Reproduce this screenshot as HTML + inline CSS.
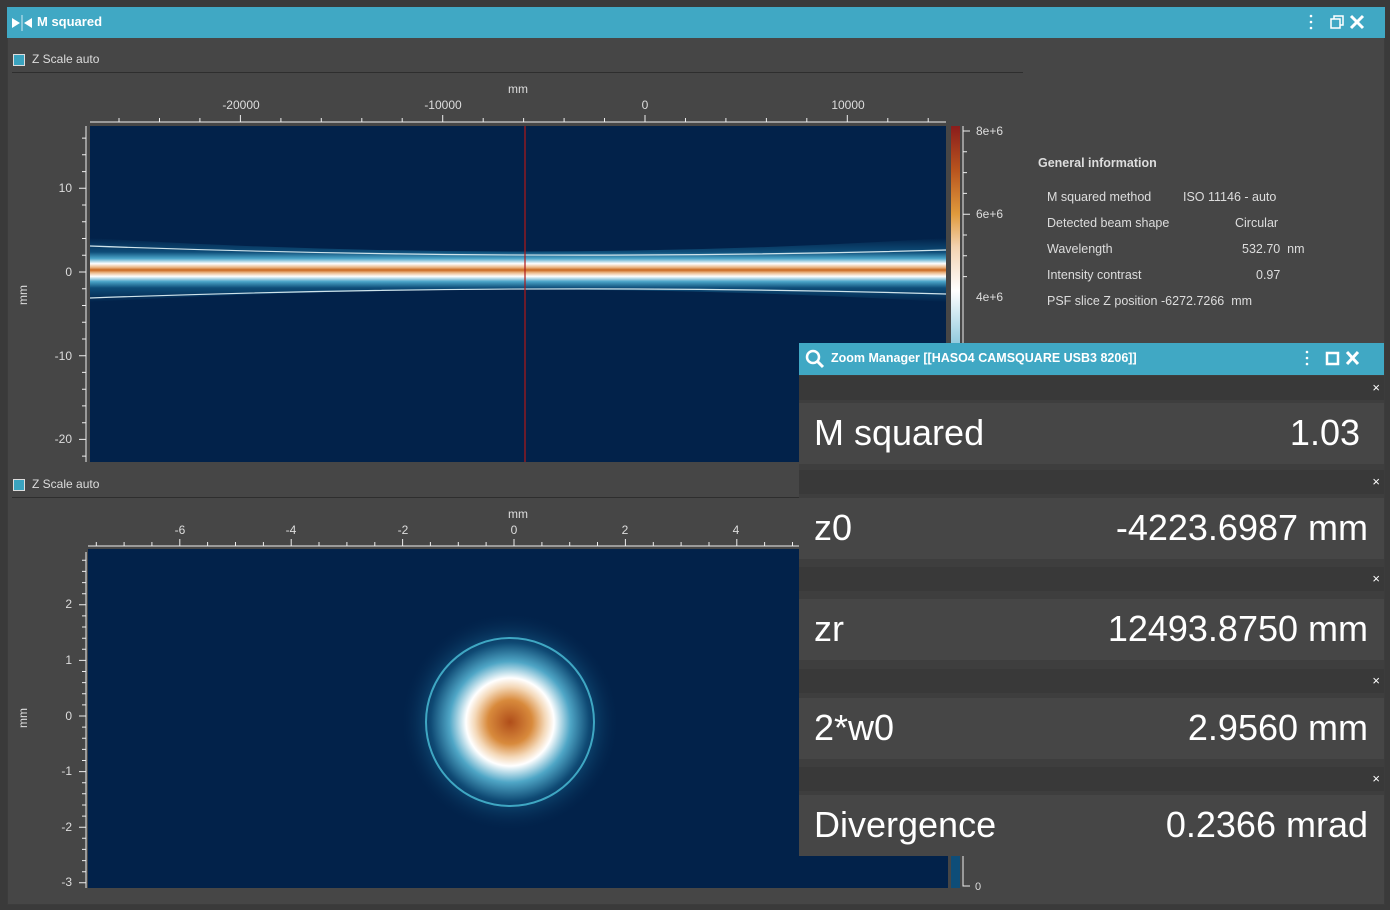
<!DOCTYPE html>
<html><head><meta charset="utf-8"><style>
*{margin:0;padding:0;box-sizing:border-box}
body{width:1390px;height:910px;background:#3a3a3a;font-family:"Liberation Sans","DejaVu Sans",sans-serif;color:#e8e8e8;position:relative;overflow:hidden}
.abs{position:absolute}
.win{left:7px;top:7px;width:1378px;height:898px;background:#464646;border:1px solid #3c3c3c}
.tb{left:7px;top:7px;width:1378px;height:31px;background:#40a8c4;color:#fff;font-weight:bold;font-size:13px}
.cb{width:12px;height:12px;background:#3aa3bf;border:1px solid #ddd}
.lbl{font-size:12px;color:#ddd}
.zm{left:799px;top:343px;width:585px;height:513px;background:#3e3e3e}
.strip{position:absolute;left:0;width:585px;height:24px;background:#393939}
.row{position:absolute;left:0;width:585px;height:61px;background:#464646;font-size:36px;color:#fff}
.row .k{position:absolute;left:15px;top:9px}
.row .v{position:absolute;right:16px;top:9px}
.x{position:absolute;right:4px;font-size:13px;color:#fff}
.info{font-size:12.5px;color:#ddd}
</style></head><body>
<div class="abs win"></div>
<div class="abs tb">
 <svg class="abs" style="left:4px;top:8px" width="24" height="16"><path d="M1 3 L9 8 L1 13Z M21 3 L13 8 L21 13Z" fill="#fff"/><line x1="11" y1="0" x2="11" y2="16" stroke="#cfeaf2" stroke-width="1"/></svg>
 <div class="abs" style="left:30px;top:7px">M squared</div>
 <svg class="abs" style="left:1300px;top:6px" width="70" height="20"><circle cx="4" cy="3" r="1.3" fill="#fff"/><circle cx="4" cy="9" r="1.3" fill="#fff"/><circle cx="4" cy="15" r="1.3" fill="#fff"/><rect x="24" y="6" width="9" height="9" fill="none" stroke="#fff" stroke-width="1.5"/><path d="M27 6 V3 H36 V12 H33" fill="none" stroke="#fff" stroke-width="1.5"/><path d="M44 3 L56 15 M56 3 L44 15" stroke="#fff" stroke-width="3"/></svg>
</div>
<div class="abs cb" style="left:13px;top:54px"></div><div class="abs lbl" style="left:32px;top:52px">Z Scale auto</div>
<div class="abs" style="left:12px;top:72px;width:1011px;height:1px;background:#2e2e2e"></div>
<div class="abs cb" style="left:13px;top:479px"></div><div class="abs lbl" style="left:32px;top:477px">Z Scale auto</div>
<div class="abs" style="left:12px;top:497px;width:1011px;height:1px;background:#2e2e2e"></div>

<svg class="abs" style="left:0;top:0" width="1390" height="910" font-family="Liberation Sans, sans-serif" font-size="12" fill="#ddd">
<defs>
 <linearGradient id="beam" x1="0" y1="0" x2="0" y2="1">
  <stop offset="0" stop-color="#02224a"/><stop offset="0.22" stop-color="#0e4d78"/><stop offset="0.32" stop-color="#4aa4c8"/><stop offset="0.4" stop-color="#ffffff"/><stop offset="0.46" stop-color="#eab583"/><stop offset="0.5" stop-color="#c8661e"/><stop offset="0.54" stop-color="#eab583"/><stop offset="0.6" stop-color="#ffffff"/><stop offset="0.68" stop-color="#4aa4c8"/><stop offset="0.78" stop-color="#0e4d78"/><stop offset="1" stop-color="#02224a"/>
 </linearGradient>
 <linearGradient id="cbar" x1="0" y1="0" x2="0" y2="1">
  <stop offset="0" stop-color="#8a1c1c"/><stop offset="0.2" stop-color="#b8541e"/><stop offset="0.4" stop-color="#e09a3c"/><stop offset="0.55" stop-color="#f2d2b0"/><stop offset="0.75" stop-color="#ffffff"/><stop offset="1" stop-color="#8cc8dc"/>
 </linearGradient>
 <radialGradient id="spot" cx="0.5" cy="0.5" r="0.5">
  <stop offset="0" stop-color="#b04e1a"/><stop offset="0.2" stop-color="#d88a3c"/><stop offset="0.32" stop-color="#f4d8b8"/><stop offset="0.4" stop-color="#ffffff"/><stop offset="0.55" stop-color="#4fa6c6"/><stop offset="0.72" stop-color="#0f4a74"/><stop offset="1" stop-color="#02224a" stop-opacity="0"/>
 </radialGradient>
 <linearGradient id="fade" x1="0" y1="0" x2="1" y2="0"><stop offset="0" stop-color="#02224a" stop-opacity="0"/><stop offset="0.97" stop-color="#02224a" stop-opacity="0"/><stop offset="1" stop-color="#02224a" stop-opacity="0.5"/></linearGradient>
</defs>
<!-- plot 1 -->
<rect x="90" y="126" width="856" height="336" fill="#02224a"/>
<path d="M90 238 Q525 265 946 238 L946 302 Q525 277 90 302Z" fill="url(#beam)"/>
<path d="M90 246 Q525 262 946 250" fill="none" stroke="#cfe3ea" stroke-width="1.2"/>
<path d="M90 298 Q525 282 946 294" fill="none" stroke="#cfe3ea" stroke-width="1.2"/>
<line x1="525" y1="126" x2="525" y2="462" stroke="#b01818" stroke-width="1.2"/>
<line x1="90" y1="122" x2="946" y2="122" stroke="#eee"/>
<line x1="86" y1="126" x2="86" y2="462" stroke="#eee"/>
<text x="518" y="93" text-anchor="middle">mm</text>
<text x="241" y="109" text-anchor="middle">-20000</text><text x="443" y="109" text-anchor="middle">-10000</text><text x="645" y="109" text-anchor="middle">0</text><text x="848" y="109" text-anchor="middle">10000</text>
<text x="72" y="192" text-anchor="end">10</text><text x="72" y="276" text-anchor="end">0</text><text x="72" y="360" text-anchor="end">-10</text><text x="72" y="443" text-anchor="end">-20</text>
<text transform="translate(27,295) rotate(-90)" text-anchor="middle">mm</text>
<rect x="951" y="126" width="9" height="220" fill="url(#cbar)"/>
<line x1="963" y1="126" x2="963" y2="346" stroke="#eee"/>
<text x="976" y="135">8e+6</text><text x="976" y="218">6e+6</text><text x="976" y="301">4e+6</text>
<!-- plot 2 -->
<rect x="88" y="549" width="860" height="339" fill="#02224a"/>
<circle cx="510" cy="722" r="110" fill="url(#spot)"/>
<circle cx="510" cy="722" r="84" fill="none" stroke="#3fa7c3" stroke-width="2"/>
<line x1="88" y1="546" x2="948" y2="546" stroke="#eee"/>
<line x1="86" y1="552" x2="86" y2="888" stroke="#eee"/>
<text x="518" y="518" text-anchor="middle">mm</text>
<text x="180" y="534" text-anchor="middle">-6</text><text x="291" y="534" text-anchor="middle">-4</text><text x="403" y="534" text-anchor="middle">-2</text><text x="514" y="534" text-anchor="middle">0</text><text x="625" y="534" text-anchor="middle">2</text><text x="736" y="534" text-anchor="middle">4</text>
<text x="72" y="608" text-anchor="end">2</text><text x="72" y="664" text-anchor="end">1</text><text x="72" y="720" text-anchor="end">0</text><text x="72" y="775" text-anchor="end">-1</text><text x="72" y="831" text-anchor="end">-2</text><text x="72" y="886" text-anchor="end">-3</text>
<text transform="translate(27,718) rotate(-90)" text-anchor="middle">mm</text>
<rect x="951" y="855" width="9" height="33" fill="#0e4d78"/>
<path d="M963 855 V886 H970" fill="none" stroke="#eee"/>
<text x="975" y="890" font-size="11">0</text>
<path id="ticks" fill="none" stroke="#eee" stroke-width="1"/>
</svg>

<div class="abs info" style="left:1038px;top:156px;font-weight:bold">General information</div>
<div class="abs info" style="left:1047px;top:190px">M squared method</div><div class="abs info" style="left:1183px;top:190px">ISO 11146 - auto</div>
<div class="abs info" style="left:1047px;top:216px">Detected beam shape</div><div class="abs info" style="left:1235px;top:216px">Circular</div>
<div class="abs info" style="left:1047px;top:242px">Wavelength</div><div class="abs info" style="left:1242px;top:242px">532.70&nbsp; nm</div>
<div class="abs info" style="left:1047px;top:268px">Intensity contrast</div><div class="abs info" style="left:1256px;top:268px">0.97</div>
<div class="abs info" style="left:1047px;top:294px">PSF slice Z position</div><div class="abs info" style="left:1161px;top:294px">-6272.7266&nbsp; mm</div>

<div class="abs zm">
 <div class="abs" style="left:0;top:0;width:585px;height:32px;background:#40a8c4;color:#fff;font-weight:bold;font-size:12.5px">
  <svg class="abs" style="left:6px;top:6px" width="20" height="20"><circle cx="8" cy="8" r="6" fill="none" stroke="#fff" stroke-width="2.5"/><path d="M12.5 12.5 L18 18" stroke="#fff" stroke-width="3"/></svg>
  <div class="abs" style="left:32px;top:8px">Zoom Manager [[HASO4 CAMSQUARE USB3 8206]]</div>
  <svg class="abs" style="left:502px;top:6px" width="80" height="20"><circle cx="6" cy="3" r="1.3" fill="#fff"/><circle cx="6" cy="9" r="1.3" fill="#fff"/><circle cx="6" cy="15" r="1.3" fill="#fff"/><rect x="26" y="4" width="11" height="11" fill="none" stroke="#fff" stroke-width="2.5"/><path d="M46 3 L57 15 M57 3 L46 15" stroke="#fff" stroke-width="3"/></svg>
 </div>
 <div class="strip" style="top:33px"></div><div class="x" style="top:37px">×</div>
 <div class="row" style="top:60px"><span class="k">M squared</span><span class="v" style="right:24px">1.03</span></div>
 <div class="strip" style="top:127px"></div><div class="x" style="top:131px">×</div>
 <div class="row" style="top:155px"><span class="k">z0</span><span class="v">-4223.6987 mm</span></div>
 <div class="strip" style="top:224px"></div><div class="x" style="top:228px">×</div>
 <div class="row" style="top:256px"><span class="k">zr</span><span class="v">12493.8750 mm</span></div>
 <div class="strip" style="top:326px"></div><div class="x" style="top:330px">×</div>
 <div class="row" style="top:355px"><span class="k">2*w0</span><span class="v">2.9560 mm</span></div>
 <div class="strip" style="top:424px"></div><div class="x" style="top:428px">×</div>
 <div class="row" style="top:452px"><span class="k">Divergence</span><span class="v">0.2366 mrad</span></div>
</div>
<script>
var d="";
for(var v=-28000;v<=14000;v+=2000){var x=645+v*0.02023;if(x<90||x>946)continue;var L=v%10000==0?7:4;d+="M"+x.toFixed(1)+" 122 V"+(122-L);}
for(var v=16;v>=-22;v-=2){var y=272-v*8.37;if(y<126||y>462)continue;var L=v%10==0?7:4;d+="M86 "+y.toFixed(1)+" H"+(86-L);}
for(var v=-7.5;v<=7.5;v+=0.5){var x=514+v*55.7;if(x<88||x>948)continue;var L=v%2==0?7:4;d+="M"+x.toFixed(1)+" 546 V"+(546-L);}
for(var v=3;v>=-3.1;v-=0.2){var y=716-v*55.6;if(y<552||y>888)continue;var r=Math.round(v*5);var L=r%5==0?7:4;d+="M86 "+y.toFixed(1)+" H"+(86-L);}
for(var i=0;i<8;i++){var y=131+i*20.8;d+="M963 "+y.toFixed(1)+" H"+(i%4==0?970:967);}
document.getElementById("ticks").setAttribute("d",d);
</script>
</body></html>
